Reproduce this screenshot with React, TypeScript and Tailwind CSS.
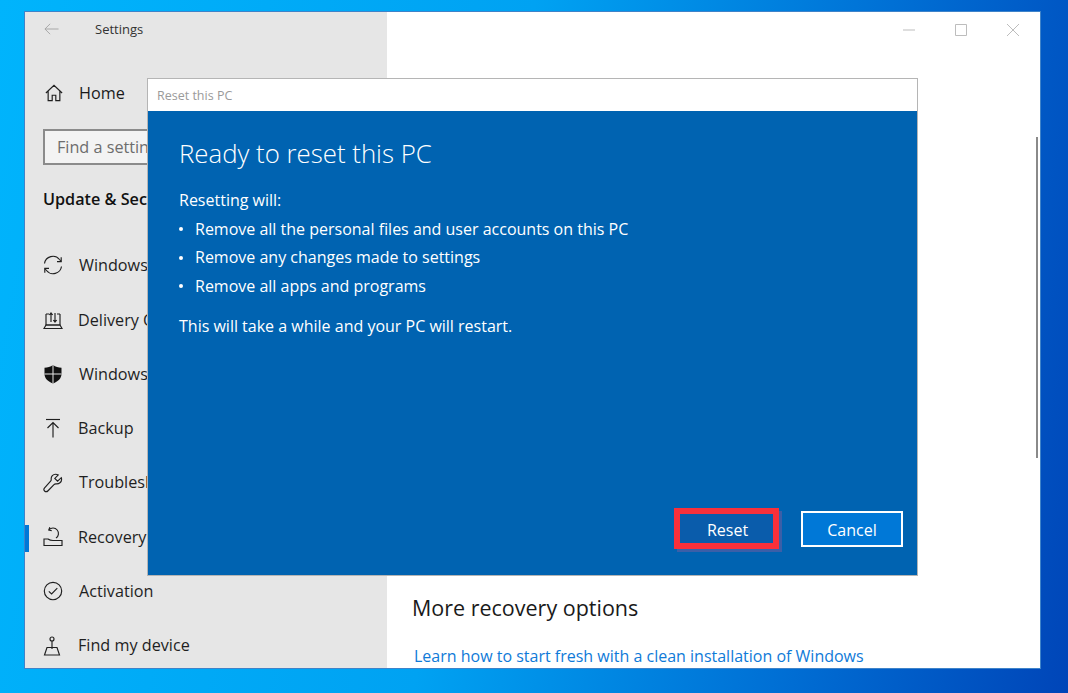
import React from 'react';

const Icon: React.FC<{ children: React.ReactNode }> = ({ children }) => (
  <svg viewBox="0 0 20 20" className="w-[20px] h-[20px] shrink-0 text-[#1f1f1f]" fill="none" stroke="currentColor" strokeWidth="1.15">
    {children}
  </svg>
);

const navItems: { label: string; textLeft: string; active?: boolean; icon: React.ReactNode }[] = [
  {
    label: 'Windows Update',
    textLeft: 'ml-[16px]',
    icon: (
      <>
        <path d="M1.5 8.5A8.5 8.5 0 0 1 16.5 4.5L18.2 6.5" />
        <path d="M18.2 2.2V6.6H14" />
        <path d="M18.5 11.5A8.5 8.5 0 0 1 3.5 15.5L1.8 13.5" />
        <path d="M1.8 17.8V13.4H6" />
      </>
    ),
  },
  {
    label: 'Delivery Optimization',
    textLeft: 'ml-[15px]',
    icon: (
      <>
        <path d="M3 4V15H17V4M14 4H17M3 4H6" />
        <path d="M1 18.5H19L17 15H3L1 18.5Z" />
        <path d="M8 12V3M6.3 5L8 3L9.7 5M12 3V12M10.3 10L12 12L13.7 10" />
      </>
    ),
  },
  {
    label: 'Windows Security',
    textLeft: 'ml-[16px]',
    icon: (
      <>
        <path d="M10 1C7.5 3 4.5 3.7 1.5 3.8V10C1.5 14.5 5 17.5 10 19.5C15 17.5 18.5 14.5 18.5 10V3.8C15.5 3.7 12.5 3 10 1Z" fill="#111" stroke="none" />
        <path d="M10 1V19.5M1.5 10H18.5" stroke="#e6e6e6" strokeWidth="1" />
      </>
    ),
  },
  {
    label: 'Backup',
    textLeft: 'ml-[15px]',
    icon: (
      <>
        <path d="M3 1.5H17" />
        <path d="M10 19.5V4.5M4.5 10L10 4.5L15.5 10" />
      </>
    ),
  },
  {
    label: 'Troubleshoot',
    textLeft: 'ml-[16px]',
    icon: (
      <path d="M12.5 1.2C10 1.2 8 3.5 8.2 6C8.3 7 8.2 7.6 7.6 8.2L1.6 14.8C.7 15.8.8 17.2 1.6 18C2.5 18.9 4 18.9 4.8 18L11 11.6C11.7 10.9 12.4 10.8 13.3 10.9C16 11.2 18.6 9 18.6 6.4C18.6 5.7 18.5 5.2 18.3 4.7L14.6 8.2L11.8 5.4L15.3 1.9C14.4 1.4 13.5 1.2 12.5 1.2Z" />
    ),
  },
  {
    label: 'Recovery',
    textLeft: 'ml-[15px]',
    active: true,
    icon: (
      <>
        <path d="M1 18.5V12H5Q7 13.5 10 13.5H19V18.5H1Z" />
        <path d="M6 2.7A5.5 5.5 0 1 1 13 11.1" />
        <path d="M6.8 .2L5.8 3L8.8 3.8" />
      </>
    ),
  },
  {
    label: 'Activation',
    textLeft: 'ml-[16px]',
    icon: (
      <>
        <circle cx="10" cy="10" r="8.7" />
        <path d="M5.8 10.4L8.6 13L14.3 7.2" />
      </>
    ),
  },
  {
    label: 'Find my device',
    textLeft: 'ml-[15px]',
    icon: (
      <>
        <circle cx="9" cy="3" r="2" />
        <path d="M9 5V13" />
        <path d="M1.5 19L4 11.5H14L16.5 19H1.5Z" />
      </>
    ),
  },
];

const App: React.FC = () => {
  return (
    <div
      className="w-[1068px] h-[693px] overflow-hidden pt-[12px] pl-[25px] bg-[linear-gradient(100deg,#00b4fc_0%,#00a2f2_45%,#0070d5_75%,#0045b8_100%)]"
      style={{ fontFamily: '"Open Sans", "Noto Sans", sans-serif' }}
    >
      <div className="relative flex w-[1015px] h-[656px] overflow-hidden shadow-[0_0_0_1px_#3f83c9]">
        {/* left nav */}
        <div className="w-[362px] shrink-0 bg-[#e6e6e6]">
          <div className="flex items-center h-[36px] pl-[19px]">
            <svg viewBox="0 0 16 12" className="w-[15px] h-[12px] text-[#a3a3a3] mt-[-2px]" fill="none" stroke="currentColor" strokeWidth="1">
              <path d="M15.5 6H1M6.5 .5L1 6L6.5 11.5" />
            </svg>
            <span className="ml-[36px] text-[13px] text-[#333]">Settings</span>
          </div>

          <div className="flex items-center h-[36px] mt-[27px] pl-[20px]">
            <svg viewBox="0 0 20 20" className="w-[18px] h-[18px] text-[#1f1f1f]" fill="none" stroke="currentColor" strokeWidth="1.3">
              <path d="M1 10L10 1.5L19 10M3.5 7.8V18.5H8V12.5H12V18.5H16.5V7.8" />
            </svg>
            <span className="ml-[16px] text-[16.2px] text-[#1a1a1a]">Home</span>
          </div>

          <div className="mt-[18px] ml-[18px] w-[300px] h-[36px] border-2 border-[#8b8b8b] bg-[#f3f3f3] pl-[12px] flex items-center text-[16.2px] text-[#6d6d6d]">
            Find a setting
          </div>

          <div className="mt-[21px] pl-[18px] h-[26px] text-[16.2px] font-semibold leading-[26px] text-[#111]">
            Update &amp; Security
          </div>

          <div className="mt-[26.3px]">
            {navItems.map((item) => (
              <div key={item.label} className="relative flex items-center h-[54.3px] pl-[18px]">
                {item.active && <div className="absolute left-0 top-[15px] w-[4px] h-[27px] bg-[#0078d7]" />}
                <Icon>{item.icon}</Icon>
                <span className={`${item.textLeft} text-[16.2px] text-[#1f1f1f] whitespace-nowrap`}>{item.label}</span>
              </div>
            ))}
          </div>
        </div>

        {/* right content */}
        <div className="relative flex-1 bg-white pl-[25px]">
          <div className="absolute right-[21px] top-[12px] flex items-center gap-[40px] text-[#bdbdbd]">
            <svg viewBox="0 0 12 12" className="w-[12px] h-[12px]" stroke="currentColor" strokeWidth="1">
              <path d="M0 6H12" />
            </svg>
            <svg viewBox="0 0 12 12" className="w-[12px] h-[12px]" fill="none" stroke="currentColor" strokeWidth="1">
              <path d="M.5 .5H11.5V11.5H.5Z" />
            </svg>
            <svg viewBox="0 0 12 12" className="w-[12px] h-[12px]" stroke="currentColor" strokeWidth="1">
              <path d="M0 0L12 12M12 0L0 12" />
            </svg>
          </div>
          <div className="absolute right-[2px] top-[125px] w-[2px] h-[321px] bg-[#8a8a8a]" />

          <div className="pt-[580px] text-[21.5px] leading-[32px] text-[#1a1a1a]">More recovery options</div>
          <div className="mt-[20px] ml-[2px] text-[16px] leading-[24px] text-[#0f7ad8] whitespace-nowrap">
            Learn how to start fresh with a clean installation of Windows
          </div>
        </div>

        {/* dialog */}
        <div className="absolute left-[122px] top-[66px] w-[771px] h-[498px] flex flex-col border border-[#b5b5b5]">
          <div className="h-[32px] shrink-0 bg-white pl-[9px] pt-[2px] flex items-center text-[12.5px] text-[#9a9a9a]">Reset this PC</div>
          <div className="flex-1 flex flex-col bg-[#0063b1] text-white pl-[31px]">
            <h1 className="mt-[24px] text-[25.8px] leading-[36px] font-light">Ready to reset this PC</h1>
            <p className="mt-[15px] text-[16px] leading-[28.7px]">Resetting will:</p>
            <ul className="text-[16px] leading-[28.7px]">
              {[
                'Remove all the personal files and user accounts on this PC',
                'Remove any changes made to settings',
                'Remove all apps and programs',
              ].map((line) => (
                <li key={line} className="flex items-center">
                  <span className="w-[4px] h-[4px] rounded-full bg-white mr-[12px]" />
                  {line}
                </li>
              ))}
            </ul>
            <p className="mt-[11px] text-[16px] leading-[29px]">This will take a while and your PC will restart.</p>

            <div className="mt-auto mb-[26px] pr-[14px] flex items-center justify-end gap-[22px]">
              <button className="w-[105px] h-[41px] border-[6px] border-[#f9303a] bg-[#0a5cab] pl-[2px] pt-[2px] text-[16px] shadow-[3px_3px_0_#3b5fa8]">
                Reset
              </button>
              <button className="w-[102px] h-[36px] border-2 border-white bg-[#0078d7] pt-[2px] text-[16px]">Cancel</button>
            </div>
          </div>
        </div>
      </div>
    </div>
  );
};

export default App;
